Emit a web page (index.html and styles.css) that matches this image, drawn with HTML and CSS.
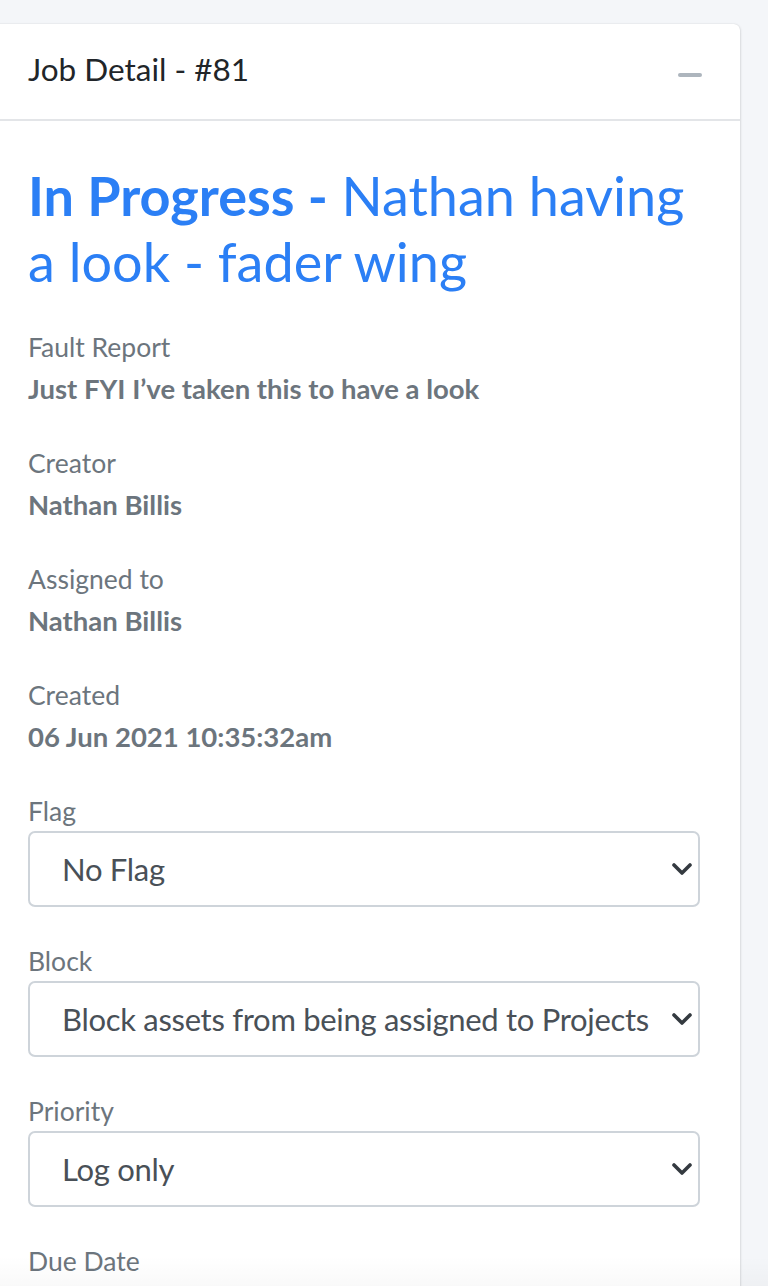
FILE: index.html
```html
<!DOCTYPE html>
<html lang="en">
<head>
<meta charset="utf-8">
<title>Job Detail - #81</title>
<link rel="stylesheet" href="styles.css">
</head>
<body>
<div class="page">
  <div class="card">
    <div class="card-header">
      <h3 class="card-title">Job Detail - #81</h3>
      <button class="collapse-btn" aria-label="Collapse"><span class="minus"></span></button>
    </div>
    <div class="card-body">
      <h1 class="job-title"><strong>In Progress -</strong> Nathan having a look - fader wing</h1>

      <div class="field">
        <div class="label">Fault Report</div>
        <div class="value">Just FYI I’ve taken this to have a look</div>
      </div>
      <div class="field">
        <div class="label">Creator</div>
        <div class="value">Nathan Billis</div>
      </div>
      <div class="field">
        <div class="label">Assigned to</div>
        <div class="value">Nathan Billis</div>
      </div>
      <div class="field">
        <div class="label">Created</div>
        <div class="value">06 Jun 2021 10:35:32am</div>
      </div>

      <div class="form-group">
        <label class="label" for="flag">Flag</label>
        <div class="select-wrap">
          <select id="flag" class="form-select"><option>No Flag</option></select>
          <svg class="chevron" viewBox="0 0 20 12" width="20" height="12"><path d="M2 2 L10 10 L18 2" fill="none" stroke="#343a40" stroke-width="3.6" stroke-linecap="round" stroke-linejoin="round"/></svg>
        </div>
      </div>
      <div class="form-group">
        <label class="label" for="block">Block</label>
        <div class="select-wrap">
          <select id="block" class="form-select"><option>Block assets from being assigned to Projects</option></select>
          <svg class="chevron" viewBox="0 0 20 12" width="20" height="12"><path d="M2 2 L10 10 L18 2" fill="none" stroke="#343a40" stroke-width="3.6" stroke-linecap="round" stroke-linejoin="round"/></svg>
        </div>
      </div>
      <div class="form-group">
        <label class="label" for="priority">Priority</label>
        <div class="select-wrap">
          <select id="priority" class="form-select"><option>Log only</option></select>
          <svg class="chevron" viewBox="0 0 20 12" width="20" height="12"><path d="M2 2 L10 10 L18 2" fill="none" stroke="#343a40" stroke-width="3.6" stroke-linecap="round" stroke-linejoin="round"/></svg>
        </div>
      </div>
      <div class="form-group">
        <label class="label">Due Date</label>
      </div>
    </div>
  </div>
</div>
</body>
</html>
```
FILE: styles.css
```css
html, body {
  margin: 0;
  padding: 0;
  background: #f4f6f9;
  font-family: Lato, "Open Sans", sans-serif;
}
.page {
  position: relative;
  padding-top: 24px;
  height: 1262px;
  overflow: hidden;
}
.page::after {
  content: "";
  position: absolute;
  left: 0;
  right: 0;
  bottom: 0;
  height: 30px;
  background: linear-gradient(to bottom, rgba(0,0,0,0), rgba(0,0,0,0.025));
  pointer-events: none;
}
.card {
  margin-left: -8px;
  width: 748px;
  background: #fff;
  border-radius: 6px;
  box-shadow: 0 0 1px rgba(0,0,0,.125), 0 1px 3px rgba(0,0,0,.2);
  min-height: 1300px;
}
.card-header {
  height: 95px;
  border-bottom: 2px solid #e3e5e8;
  display: flex;
  align-items: center;
  justify-content: space-between;
  padding: 0 38px 0 36px;
}
.card-title {
  margin: 0;
  font-size: 31.5px;
  font-weight: 400;
  color: #212529;
  padding-bottom: 6px;
}
.collapse-btn {
  border: 0;
  background: transparent;
  padding: 0;
  width: 24px;
  height: 24px;
  display: flex;
  align-items: center;
  margin-top: 6px;
}
.minus {
  display: block;
  width: 24px;
  height: 4px;
  border-radius: 2px;
  background: #adb5bd;
}
.card-body {
  padding: 42px 40px 0 36px;
}
.job-title {
  margin: 0 0 34px;
  font-size: 54px;
  line-height: 66px;
  font-weight: 400;
  color: #2b7ff5;
}
.job-title strong {
  font-weight: 700;
}
.field {
  margin-bottom: 38px;
}
.label {
  display: block;
  font-size: 26.5px;
  line-height: 36px;
  color: #6c757d;
}
.value {
  margin-top: 6px;
  font-size: 27.5px;
  line-height: 36px;
  font-weight: 700;
  color: #6c757d;
}
.form-group {
  margin-bottom: 36px;
}
.form-group .label {
  margin-bottom: 2px;
}
.select-wrap {
  position: relative;
}
.form-select {
  display: block;
  width: 100%;
  height: 76px;
  box-sizing: border-box;
  appearance: none;
  -webkit-appearance: none;
  background: #fff;
  border: 2px solid #ced4da;
  border-radius: 7px;
  padding: 0 44px 0 32px;
  font-family: Lato, "Open Sans", sans-serif;
  font-size: 31px;
  color: #495057;
  letter-spacing: -0.3px;
}
.chevron {
  position: absolute;
  right: 8px;
  top: 32px;
}
```
